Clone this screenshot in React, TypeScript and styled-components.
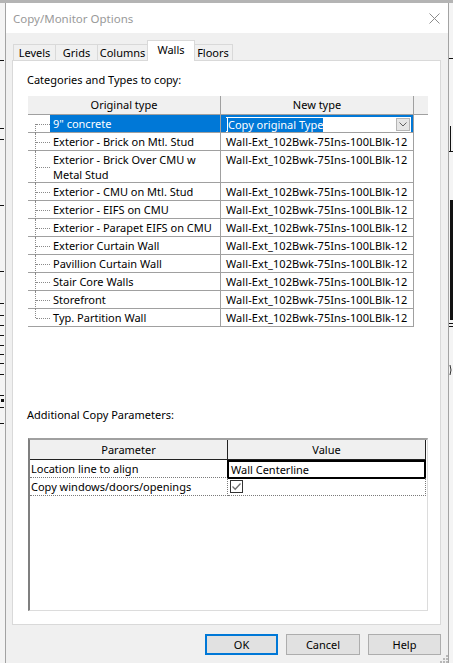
import React from "react";
import styled, { createGlobalStyle } from "styled-components";

// ------------ global page styles ------------
const GlobalStyle = createGlobalStyle`
  html, body {
    margin: 0;
    padding: 0;
    background: #f2f2f2;
  }
  body {
    font-family: "Segoe UI", "Noto Sans", "Open Sans", sans-serif;
    font-size: 11px;
    color: #000;
  }
  * {
    box-sizing: border-box;
  }
`;

// ------------ data ------------
const DEFAULT_TYPE = "Wall-Ext_102Bwk-75Ins-100LBlk-12";

const wallTypes = [
  { name: '9" concrete', selected: true },
  { name: "Exterior - Brick on Mtl. Stud" },
  { name: "Exterior - Brick Over CMU w\nMetal Stud", tall: true },
  { name: "Exterior - CMU on Mtl. Stud" },
  { name: "Exterior - EIFS on CMU" },
  { name: "Exterior - Parapet EIFS on CMU" },
  { name: "Exterior Curtain Wall" },
  { name: "Pavillion Curtain Wall" },
  { name: "Stair Core Walls" },
  { name: "Storefront" },
  { name: "Typ. Partition Wall" },
];

const tabs = [
  { label: "Levels", width: 43 },
  { label: "Grids", width: 43 },
  { label: "Columns", width: 51 },
  { label: "Walls", width: 48, active: true },
  { label: "Floors", width: 40 },
];

const leftTicks = [57, 125, 136, 202, 268, 300, 312, 322, 332, 342, 351, 360, 371, 392, 404, 420];

// ------------ small drawings ------------
function CloseIcon() {
  return (
    <svg width="11" height="11" viewBox="0 0 11 11">
      <path d="M0.5 0.5 L10.5 10.5 M10.5 0.5 L0.5 10.5" stroke="#8c8c8c" strokeWidth="1" fill="none" />
    </svg>
  );
}

function Chevron() {
  return (
    <svg width="8" height="5" viewBox="0 0 8 5">
      <path d="M0.5 0.5 L4 4 L7.5 0.5" stroke="#606060" fill="none" strokeWidth="1" />
    </svg>
  );
}

function Check() {
  return (
    <svg width="11" height="11" viewBox="0 0 11 11">
      <path d="M1.5 5.5 L4.2 8.2 L9.5 2.5" stroke="#6e6e6e" strokeWidth="1.3" fill="none" />
    </svg>
  );
}

function Grip() {
  return (
    <svg width="8" height="8" viewBox="0 0 8 8">
      {[
        [6, 0],
        [3, 3],
        [6, 3],
        [0, 6],
        [3, 6],
        [6, 6],
      ].map(([x, y]) => (
        <rect key={`${x}-${y}`} x={x} y={y} width="2" height="2" fill="#b8b8b8" />
      ))}
    </svg>
  );
}

function LeftBackdrop() {
  return (
    <svg width="5" height="660">
      {leftTicks.map((y) => (
        <line key={y} x1="0" x2="4" y1={y + 0.5} y2={y + 0.5} stroke="#111" />
      ))}
      <rect x="1" y="396" width="3" height="3" fill="#111" />
    </svg>
  );
}

function RightBackdrop() {
  return (
    <svg width="4" height="660">
      <line x1="0" x2="4" y1="55.5" y2="55.5" stroke="#111" />
      <line x1="1.5" x2="1.5" y1="123" y2="148" stroke="#111" />
      <line x1="0" x2="4" y1="148.5" y2="148.5" stroke="#111" />
      <rect x="1" y="197" width="3" height="120" fill="#111" />
      <line x1="0" x2="4" y1="320.5" y2="320.5" stroke="#111" />
      <line x1="0" x2="4" y1="323.5" y2="323.5" stroke="#111" />
      <path d="M1 362 Q3 367 1 372" stroke="#333" fill="none" />
    </svg>
  );
}

// ------------ main component ------------
export default function App() {
  return (
    <>
      <GlobalStyle />
      <Screen>
        <Backdrop $w={5}>
          <LeftBackdrop />
        </Backdrop>

        <Dialog>
          {/* ------ window title ------ */}
          <TitleBar>
            <Title>Copy/Monitor Options</Title>
            <CloseButton>
              <CloseIcon />
            </CloseButton>
          </TitleBar>

          <Body>
            {/* ------ tab strip ------ */}
            <TabStrip>
              {tabs.map((t) => (
                <Tab key={t.label} $w={t.width} $active={t.active}>
                  {t.label}
                </Tab>
              ))}
            </TabStrip>

            <Panel>
              <SectionLabel>Categories and Types to copy:</SectionLabel>

              {/* ------ types mapping table ------ */}
              <TypesTable>
                <TypesHeader>
                  <HeadCell>Original type</HeadCell>
                  <HeadCell>New type</HeadCell>
                  <HeadCell $last />
                </TypesHeader>

                {wallTypes.map((row, i) => (
                  <TypeRow key={row.name} $tall={row.tall}>
                    <Gutter $first={i === 0} $last={i === wallTypes.length - 1} />
                    <NameCell $selected={row.selected}>{row.name}</NameCell>
                    {row.selected ? (
                      <ValueCell $selected>
                        <Combo>
                          <Caret />
                          <Highlight>Copy original Type</Highlight>
                          <DropButton>
                            <Chevron />
                          </DropButton>
                        </Combo>
                      </ValueCell>
                    ) : (
                      <ValueCell>{DEFAULT_TYPE}</ValueCell>
                    )}
                  </TypeRow>
                ))}
              </TypesTable>

              <SectionLabel $top={80}>Additional Copy Parameters:</SectionLabel>

              {/* ------ parameters table ------ */}
              <ParamsTable>
                <ParamsRow>
                  <ParamHead>Parameter</ParamHead>
                  <ParamHead>Value</ParamHead>
                </ParamsRow>
                <ParamsRow>
                  <ParamCell>Location line to align</ParamCell>
                  <EditCell>Wall Centerline</EditCell>
                </ParamsRow>
                <ParamsRow>
                  <ParamCell $dotted>Copy windows/doors/openings</ParamCell>
                  <CheckCell>
                    <CheckBox>
                      <Check />
                    </CheckBox>
                  </CheckCell>
                </ParamsRow>
              </ParamsTable>
            </Panel>

            {/* ------ dialog buttons ------ */}
            <ButtonRow>
              <DialogButton $default>OK</DialogButton>
              <DialogButton $w={74}>Cancel</DialogButton>
              <DialogButton>Help</DialogButton>
            </ButtonRow>
          </Body>

          <GripCorner>
            <Grip />
          </GripCorner>
        </Dialog>

        <Backdrop $w={4}>
          <RightBackdrop />
        </Backdrop>
      </Screen>
    </>
  );
}

// ------- component styles -------
const Screen = styled.div`
  width: 453px;
  height: 663px;
  display: flex;
  border-top: 3px solid #b4b4b4;
  overflow: hidden;
`;

const Backdrop = styled.div<{ $w: number }>`
  width: ${(p) => p.$w}px;
  flex-shrink: 0;
  background: #f4f4f4;
`;

const Dialog = styled.div`
  position: relative;
  width: 444px;
  flex-shrink: 0;
  display: flex;
  flex-direction: column;
  background: #f0f0f0;
  border-left: 1px solid #a3a3a3;
  border-right: 1px solid #a3a3a3;
`;

const TitleBar = styled.div`
  height: 30px;
  display: flex;
  align-items: center;
  justify-content: space-between;
  background: #fff;
  padding-left: 7px;
`;

const Title = styled.span`
  color: #999;
  font-size: 11.5px;
`;

const CloseButton = styled.div`
  display: flex;
  align-items: center;
  margin-right: 8px;
  margin-top: 1px;
`;

const Body = styled.div`
  flex: 1;
  display: flex;
  flex-direction: column;
  padding: 7px 7px 0 6px;
`;

const TabStrip = styled.div`
  display: flex;
  align-items: flex-end;
  height: 21px;
  margin-bottom: -1px;
  padding-left: 1px;
  position: relative;
  z-index: 1;
`;

const Tab = styled.div<{ $w: number; $active?: boolean }>`
  width: ${(p) => p.$w}px;
  height: ${(p) => (p.$active ? 21 : 17)}px;
  margin-left: -1px;
  margin-right: ${(p) => (p.$active ? -1 : 0)}px;
  display: flex;
  align-items: center;
  justify-content: center;
  padding-bottom: ${(p) => (p.$active ? 3 : 0)}px;
  background: ${(p) => (p.$active ? "#fff" : "#f0f0f0")};
  border: 1px solid #d9d9d9;
  border-bottom: ${(p) => (p.$active ? "none" : "1px solid #d9d9d9")};
  position: relative;
  z-index: ${(p) => (p.$active ? 2 : 1)};

  &:first-child {
    margin-left: 0;
  }
`;

const Panel = styled.div`
  flex: 1;
  display: flex;
  flex-direction: column;
  background: #fff;
  border: 1px solid #d9d9d9;
  padding: 11px 12px 13px 14px;
`;

const SectionLabel = styled.div<{ $top?: number }>`
  line-height: 16px;
  margin-top: ${(p) => p.$top ?? 0}px;
`;

const TypesTable = styled.div`
  width: 400px;
  margin: 8px 0 0 1px;
`;

const TypesHeader = styled.div`
  display: grid;
  grid-template-columns: 193px 193px 14px;
  height: 19px;
  background: #f0f0f0;
  border-bottom: 1px solid #a0a0a0;
`;

const HeadCell = styled.div<{ $last?: boolean }>`
  text-align: center;
  line-height: 18px;
  border-right: ${(p) => (p.$last ? "none" : "1px solid #a0a0a0")};
`;

const TypeRow = styled.div<{ $tall?: boolean }>`
  display: grid;
  grid-template-columns: 22px 171px 193px;
  width: 386px;
  height: ${(p) => (p.$tall ? 32 : 18)}px;
  border-bottom: 1px solid #a0a0a0;
`;

/* tree connector: dotted trunk plus a dotted branch into the row */
const Gutter = styled.div<{ $first?: boolean; $last?: boolean }>`
  position: relative;

  &::before {
    content: "";
    position: absolute;
    left: 7px;
    top: ${(p) => (p.$first ? "50%" : "0")};
    bottom: ${(p) => (p.$last ? "50%" : "-1px")};
    border-left: 1px dotted #8a8a8a;
  }

  &::after {
    content: "";
    position: absolute;
    left: 8px;
    right: 0;
    top: 50%;
    border-top: 1px dotted #8a8a8a;
  }
`;

const NameCell = styled.div<{ $selected?: boolean }>`
  white-space: pre-line;
  line-height: ${(p) => (p.$selected ? 17 : 15)}px;
  padding: ${(p) => (p.$selected ? 0 : 1)}px 0 0 3px;
  background: ${(p) => (p.$selected ? "#0078d7" : "#fff")};
  color: ${(p) => (p.$selected ? "#fff" : "#000")};
  border-right: 1px solid #a0a0a0;
`;

const ValueCell = styled.div<{ $selected?: boolean }>`
  line-height: 15px;
  padding: ${(p) => (p.$selected ? "2px 2px 0 5px" : "1px 0 0 5px")};
  background: ${(p) => (p.$selected ? "#0078d7" : "#fff")};
  border-right: 1px solid #a0a0a0;
  white-space: nowrap;
  overflow: hidden;
  letter-spacing: 0.08px;
`;

const Combo = styled.div`
  height: 15px;
  display: flex;
  align-items: center;
  background: #fff;
`;

const Caret = styled.span`
  width: 1px;
  height: 13px;
  background: #0078d7;
  margin-right: 1px;
`;

const Highlight = styled.span`
  line-height: 14px;
  color: #fff;
  background: #0078d7;
  letter-spacing: 0;
`;

const DropButton = styled.span`
  width: 14px;
  height: 13px;
  margin: 0 1px 0 auto;
  display: flex;
  align-items: center;
  justify-content: center;
  background: #e6e6e6;
  border: 1px solid #b5b5b5;
`;

const ParamsTable = styled.div`
  flex: 1;
  width: 400px;
  margin: 15px 0 0 1px;
  background: #fff;
  border-top: 2px solid #a0a0a0;
  border-left: 2px solid #7f7f7f;
  border-right: 1px solid #dcdcdc;
  border-bottom: 1px solid #dcdcdc;
`;

const ParamsRow = styled.div`
  display: grid;
  grid-template-columns: 198px 198px;
`;

const ParamHead = styled.div`
  height: 20px;
  line-height: 19px;
  text-align: center;
  background: #f0f0f0;
  border-right: 1px solid #222;
  border-bottom: 1px solid #222;
`;

const ParamCell = styled.div<{ $dotted?: boolean }>`
  height: 18px;
  line-height: 17px;
  padding-left: 1px;
  border-bottom: 1px dotted #7a7a7a;
  border-right: ${(p) => (p.$dotted ? "1px dotted #7a7a7a" : "none")};
`;

const EditCell = styled.div`
  height: 19px;
  line-height: 15px;
  margin-left: -1px;
  padding-left: 2px;
  border: 2px solid #000;
  margin-bottom: -1px;
`;

const CheckCell = styled.div`
  height: 18px;
  display: flex;
  align-items: center;
  padding-left: 2px;
  border-right: 1px dotted #7a7a7a;
  border-bottom: 1px dotted #7a7a7a;
`;

const CheckBox = styled.span`
  width: 13px;
  height: 13px;
  display: flex;
  align-items: center;
  justify-content: center;
  background: #fff;
  border: 1px solid #333;
`;

const ButtonRow = styled.div`
  display: flex;
  justify-content: flex-end;
  gap: 8px;
  margin: 9px 0 8px;
`;

const DialogButton = styled.button<{ $default?: boolean; $w?: number }>`
  width: ${(p) => p.$w ?? 73}px;
  height: 21px;
  padding: 0;
  font: inherit;
  color: #000;
  background: #e1e1e1;
  border: ${(p) => (p.$default ? "2px solid #0078d7" : "1px solid #adadad")};
`;

const GripCorner = styled.div`
  position: absolute;
  right: 0;
  bottom: 0;
  line-height: 0;
`;
